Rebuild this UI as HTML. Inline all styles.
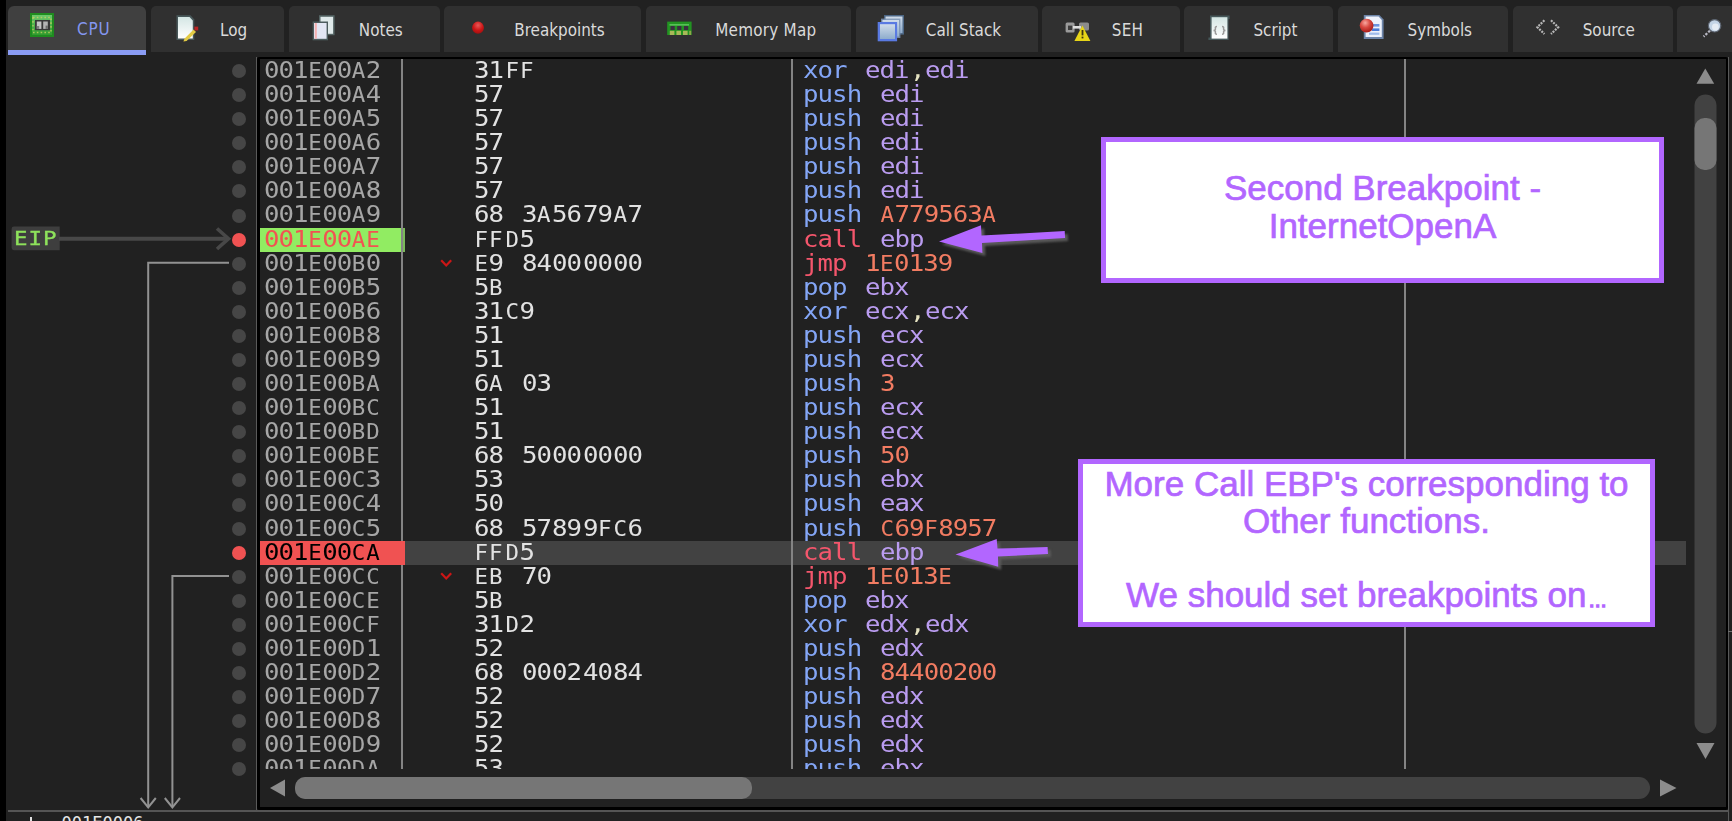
<!DOCTYPE html>
<html><head><meta charset="utf-8"><title>x32dbg - CPU</title>
<style>
html,body{margin:0;padding:0}
body{width:1732px;height:821px;background:#212121;overflow:hidden;position:relative;font-family:"Liberation Sans",sans-serif}
.a{position:absolute}
.tab{position:absolute;top:6px;height:46px;background:#303030;border-radius:5px 5px 0 0;color:#dadada;font-family:"DejaVu Sans Condensed","Liberation Sans",sans-serif;font-size:16.9px;line-height:46px;white-space:nowrap}
.tab span{position:absolute;top:0.5px}
.tab.sel{background:#404040;color:#8497f0;height:44px;border-bottom:5px solid #8a9cf4;border-radius:6px 6px 0 0}
.tab.sel span{top:-0.5px}
.mono{font-family:"DejaVu Sans Mono","Liberation Mono",monospace;font-size:23.6px;letter-spacing:0.34px;line-height:24px;white-space:pre}
.row{position:absolute;left:0;width:1732px;height:24px}
.row span{position:absolute;top:-1.2px;height:24px;transform:scaleX(1.09);transform-origin:0 0;letter-spacing:-0.86px}
.row i{display:inline-block;width:13.349px;text-align:center;font-style:normal;font-size:20.6px;letter-spacing:0;line-height:0}
.ad{color:#a6a6a6}
.by{color:#e2e2e2}
.m{color:#84a6f6}
.r{color:#ba9cf0}
.c{color:#f27c62}
.j{color:#f4566c}
.k{color:#e6e3c2}
.box{position:absolute;background:#fff;border:5px solid #b266ff;color:#b266ff;text-align:center;box-sizing:border-box;font-family:"Liberation Sans",sans-serif;white-space:nowrap;-webkit-text-stroke:0.7px #b266ff}
</style></head><body>

<div class="a" style="left:0;top:0;width:6.3px;height:821px;background:#000"></div>
<div class="tab sel" style="left:8px;width:138px"><span style="left:69px;letter-spacing:0.9px">CPU</span></div>
<div class="tab" style="left:150.5px;width:133.5px"><span style="left:69.5px">Log</span></div>
<div class="tab" style="left:288.5px;width:151.0px"><span style="left:70.3px">Notes</span></div>
<div class="tab" style="left:444px;width:196.5px"><span style="left:70.3px">Breakpoints</span></div>
<div class="tab" style="left:645.5px;width:205.5px"><span style="left:69.7px;letter-spacing:0.25px">Memory Map</span></div>
<div class="tab" style="left:856px;width:181.5px"><span style="left:69.8px">Call Stack</span></div>
<div class="tab" style="left:1042px;width:137.5px"><span style="left:69.8px;letter-spacing:0.25px">SEH</span></div>
<div class="tab" style="left:1184px;width:149px"><span style="left:69.4px">Script</span></div>
<div class="tab" style="left:1338px;width:170px"><span style="left:69.5px">Symbols</span></div>
<div class="tab" style="left:1513px;width:159.5px"><span style="left:69.7px">Source</span></div>
<div class="tab" style="left:1677px;width:63px"><span style="left:-1678px"></span></div>
<svg class="a" style="left:0;top:0" width="1732" height="56" viewBox="0 0 1732 56">
<defs>
<linearGradient id="gcpu" x1="0" y1="0" x2="0" y2="1"><stop offset="0" stop-color="#6cc86c"/><stop offset="1" stop-color="#2f9a2f"/></linearGradient>
<linearGradient id="gpg" x1="0" y1="0" x2="0" y2="1"><stop offset="0" stop-color="#d4e6e4"/><stop offset="1" stop-color="#ffffff"/></linearGradient>
<linearGradient id="gblue" x1="0" y1="0" x2="0" y2="1"><stop offset="0" stop-color="#d0dcea"/><stop offset="1" stop-color="#8eaccc"/></linearGradient>
<radialGradient id="gred" cx="0.4" cy="0.3" r="0.7"><stop offset="0" stop-color="#f8a8a0"/><stop offset="0.5" stop-color="#d84840"/><stop offset="1" stop-color="#a81c18"/></radialGradient>
<radialGradient id="gbp" cx="0.5" cy="0.3" r="0.7"><stop offset="0" stop-color="#e85858"/><stop offset="0.6" stop-color="#cc1616"/><stop offset="1" stop-color="#a01010"/></radialGradient>
</defs>
<!-- CPU -->
<rect x="30" y="13" width="24" height="24" fill="#1f8c1f"/>
<rect x="32" y="15" width="20" height="20" fill="url(#gcpu)"/>
<rect x="33" y="17.5" width="18" height="15" fill="none" stroke="#c8d060" stroke-width="1.4" stroke-dasharray="1.6 2.2" opacity="0.8"/>
<rect x="35" y="20" width="15" height="10.2" fill="#383838"/>
<rect x="36.8" y="21.5" width="4.6" height="7.4" fill="#c4c4c4"/><rect x="43.2" y="21.5" width="4.6" height="7.4" fill="#b4b4b4"/>
<rect x="36.8" y="26" width="2.4" height="2.9" fill="#7c7c7c"/><rect x="45.6" y="25.6" width="2.2" height="3.3" fill="#6c6c6c"/>
<!-- Log -->
<path d="M176.5 15.3 H190.5 L194.3 19.5 V40 H176.5 Z" fill="#48585a"/>
<path d="M178 17 H189.5 L192.8 20.6 V38.6 H178 Z" fill="url(#gpg)"/>
<path d="M193.6 29.4 L184.6 38.6 L183.4 41.4 L186.6 41 L196 32 Z" fill="#e2ca44"/>
<rect x="194.4" y="26.6" width="3.8" height="3.8" fill="#b82424"/>
<!-- Notes -->
<rect x="319" y="15.2" width="15.6" height="20" fill="#546464"/>
<rect x="320.5" y="16.8" width="12.6" height="17" fill="#dfe9ea"/>
<rect x="312.6" y="21.5" width="15.4" height="18.8" fill="#4c5c5e"/>
<rect x="314" y="23" width="12.6" height="15.8" fill="#e2e6f4"/>
<rect x="314.8" y="23" width="2" height="15.8" fill="#f4b0b0"/>
<!-- Breakpoints -->
<ellipse cx="478" cy="27.7" rx="5.9" ry="6.1" fill="url(#gbp)"/>
<!-- Memory map -->
<rect x="667.2" y="21.6" width="24.4" height="13.4" fill="#229422"/>
<rect x="669.5" y="24" width="19.5" height="1.6" fill="#58c058"/>
<rect x="670.5" y="26" width="4.2" height="4" fill="#3a3040"/><rect x="677.2" y="26" width="4.2" height="4" fill="#3a3040"/><rect x="684" y="26" width="4.2" height="4" fill="#3a3040"/>
<rect x="669.8" y="30.8" width="4.6" height="4.2" fill="#a8b858"/><rect x="676.4" y="30.8" width="4.6" height="4.2" fill="#a8b858"/><rect x="683" y="30.8" width="4.6" height="4.2" fill="#a8b858"/><rect x="689.2" y="30.8" width="2" height="4.2" fill="#8ca848"/>
<!-- Call stack -->
<rect x="884" y="15" width="20" height="19.6" fill="#4c6684"/>
<rect x="885.5" y="16.5" width="17" height="16.6" fill="url(#gblue)"/>
<rect x="881" y="18.6" width="19.4" height="19.4" fill="#7c94b4" opacity="0.85"/>
<rect x="882.4" y="20" width="16.6" height="16.6" fill="url(#gblue)"/>
<rect x="877.7" y="22" width="19.4" height="19.3" fill="#5a7ae2"/>
<rect x="880" y="24.2" width="15" height="14.8" fill="url(#gblue)"/>
<!-- SEH -->
<rect x="1065.6" y="22.6" width="9" height="9.8" rx="1.5" fill="#9a9a9a"/><rect x="1068" y="25.6" width="4.2" height="4.4" fill="#3c3c3c"/>
<rect x="1079" y="22.6" width="10" height="8" rx="1.5" fill="#8c8c8c"/>
<rect x="1073" y="26" width="8" height="2.6" fill="#e0e0e0"/>
<path d="M1082.4 25.6 L1090.4 41 H1074.4 Z" fill="#e6d418"/>
<rect x="1081.6" y="30" width="1.8" height="5.4" fill="#3a3410"/><rect x="1081.6" y="36.6" width="1.8" height="1.8" fill="#3a3410"/>
<!-- Script -->
<path d="M1210 15.4 H1229.6 V19 H1228.6 V40 H1208.4 V37.4 H1210 Z" fill="#46585a"/>
<rect x="1211.6" y="17.2" width="15.8" height="21.4" fill="url(#gpg)"/>
<path d="M1217 26.6 Q1215 26.6 1215.4 28.4 Q1215.8 30.2 1213.6 30.4 Q1215.8 30.6 1215.4 32.4 Q1215 34.2 1217 34.2 M1222 26.6 Q1224 26.6 1223.6 28.4 Q1223.2 30.2 1225.4 30.4 Q1223.2 30.6 1223.6 32.4 Q1224 34.2 1222 34.2" fill="none" stroke="#9a9a9a" stroke-width="1.5"/>
<!-- Symbols -->
<path d="M1363.8 15 H1379.4 L1383.6 19.4 V39 H1363.8 Z" fill="#6c84a8"/>
<path d="M1365.6 16.6 H1378.6 L1381.8 20 V37 H1365.6 Z" fill="#eef2fc"/>
<rect x="1372" y="24" width="7.4" height="2.6" fill="#6c94e0"/><rect x="1372" y="28.4" width="7.4" height="2.6" fill="#4c7cd8"/><rect x="1369" y="32.6" width="10.4" height="2.2" fill="#a0bcec"/>
<circle cx="1366.6" cy="25.6" r="6.9" fill="url(#gred)"/>
<!-- Source -->
<path d="M1544.4 20.3 L1537.4 27.2 L1544.4 34 M1551 20.3 L1558.2 27.2 L1551 34" fill="none" stroke="#b8b8b8" stroke-width="2.2" stroke-dasharray="2 1.1"/>
<!-- Search -->
<path d="M1710 30.6 L1703.6 36.6" stroke="#b8b8c4" stroke-width="2.2" stroke-dasharray="2.4 1.4"/>
<circle cx="1714.6" cy="25.8" r="6.2" fill="#c4d4e6" stroke="#5c6470" stroke-width="1.2"/>
<circle cx="1715.4" cy="27" r="3.4" fill="#e6ecf4"/>
</svg>

<div class="a" style="left:256px;top:57px;width:1px;height:754px;background:#5a5a5a"></div>
<div class="a" style="left:257.2px;top:56.7px;width:1470.5px;height:753.8px;background:#000;border-radius:2px"></div>
<div class="a" style="left:259.6px;top:58.7px;width:1466px;height:748.6px;background:#212121"></div>
<div class="a" style="left:1728px;top:57px;width:1px;height:764px;background:#5a5a5a"></div>
<div class="a" style="left:1728px;top:631px;width:4px;height:1.2px;background:#707070"></div>
<div class="a" style="left:8.3px;top:810.3px;width:1721px;height:2px;background:#555"></div>
<div class="a" style="left:404px;top:540.8px;width:1282px;height:24.1px;background:#424242"></div>
<div class="a" style="left:260px;top:227.69px;width:143px;height:24.1px;background:#91ec62"></div>
<div class="a" style="left:403px;top:227.69px;width:2.2px;height:24.1px;background:#7aba5a"></div>
<div class="a" style="left:401.2px;top:59px;width:2.2px;height:709.5px;background:#848484"></div>
<div class="a" style="left:791px;top:59px;width:2.2px;height:709.5px;background:#848484"></div>
<div class="a" style="left:1404px;top:59px;width:2.2px;height:709.5px;background:#848484"></div>
<div class="a" style="left:260px;top:540.8px;width:144.6px;height:24.1px;background:#f05252"></div>
<div class="a mono" style="left:0;top:59px;width:1732px;height:709.5px;overflow:hidden">
<div class="row" style="top:0.1px">
<span class="ad" style="left:264.2px">001<i>E</i>00<i>A</i>2</span>
<span class="by" style="left:474.2px">31</span>
<span class="by" style="left:504.6px"><i>F</i><i>F</i></span>
<span class="m" style="left:803.2px">xor </span>
<span class="r" style="left:865.0px">edi</span>
<span class="k" style="left:910.45px">,</span>
<span class="r" style="left:925.3px">edi</span>
</div>
<div class="row" style="top:24.19px">
<span class="ad" style="left:264.2px">001<i>E</i>00<i>A</i>4</span>
<span class="by" style="left:474.2px">57</span>
<span class="m" style="left:803.2px">push </span>
<span class="r" style="left:879.55px">edi</span>
</div>
<div class="row" style="top:48.27px">
<span class="ad" style="left:264.2px">001<i>E</i>00<i>A</i>5</span>
<span class="by" style="left:474.2px">57</span>
<span class="m" style="left:803.2px">push </span>
<span class="r" style="left:879.55px">edi</span>
</div>
<div class="row" style="top:72.35px">
<span class="ad" style="left:264.2px">001<i>E</i>00<i>A</i>6</span>
<span class="by" style="left:474.2px">57</span>
<span class="m" style="left:803.2px">push </span>
<span class="r" style="left:879.55px">edi</span>
</div>
<div class="row" style="top:96.44px">
<span class="ad" style="left:264.2px">001<i>E</i>00<i>A</i>7</span>
<span class="by" style="left:474.2px">57</span>
<span class="m" style="left:803.2px">push </span>
<span class="r" style="left:879.55px">edi</span>
</div>
<div class="row" style="top:120.53px">
<span class="ad" style="left:264.2px">001<i>E</i>00<i>A</i>8</span>
<span class="by" style="left:474.2px">57</span>
<span class="m" style="left:803.2px">push </span>
<span class="r" style="left:879.55px">edi</span>
</div>
<div class="row" style="top:144.61px">
<span class="ad" style="left:264.2px">001<i>E</i>00<i>A</i>9</span>
<span class="by" style="left:474.2px">68 </span>
<span class="by" style="left:522.05px">3<i>A</i></span>
<span class="by" style="left:552.45px">56</span>
<span class="by" style="left:582.85px">79</span>
<span class="by" style="left:613.25px"><i>A</i>7</span>
<span class="m" style="left:803.2px">push </span>
<span class="c" style="left:879.55px"><i>A</i>779563<i>A</i></span>
</div>
<div class="row" style="top:168.69px">
<span class="ad" style="left:264.2px;color:#f25252">001<i>E</i>00<i>A</i><i>E</i></span>
<span class="by" style="left:474.2px"><i>F</i><i>F</i></span>
<span class="by" style="left:504.6px"><i>D</i>5</span>
<span class="j" style="left:803.2px">call </span>
<span class="r" style="left:879.55px">ebp</span>
</div>
<div class="row" style="top:192.78px">
<span class="ad" style="left:264.2px">001<i>E</i>00<i>B</i>0</span>
<span class="by" style="left:474.2px"><i>E</i>9 </span>
<span class="by" style="left:522.05px">84</span>
<span class="by" style="left:552.45px">00</span>
<span class="by" style="left:582.85px">00</span>
<span class="by" style="left:613.25px">00</span>
<span class="j" style="left:803.2px">jmp </span>
<span class="c" style="left:865.0px">1<i>E</i>0139</span>
</div>
<div class="row" style="top:216.87px">
<span class="ad" style="left:264.2px">001<i>E</i>00<i>B</i>5</span>
<span class="by" style="left:474.2px">5<i>B</i></span>
<span class="m" style="left:803.2px">pop </span>
<span class="r" style="left:865.0px">ebx</span>
</div>
<div class="row" style="top:240.95px">
<span class="ad" style="left:264.2px">001<i>E</i>00<i>B</i>6</span>
<span class="by" style="left:474.2px">31</span>
<span class="by" style="left:504.6px"><i>C</i>9</span>
<span class="m" style="left:803.2px">xor </span>
<span class="r" style="left:865.0px">ecx</span>
<span class="k" style="left:910.45px">,</span>
<span class="r" style="left:925.3px">ecx</span>
</div>
<div class="row" style="top:265.04px">
<span class="ad" style="left:264.2px">001<i>E</i>00<i>B</i>8</span>
<span class="by" style="left:474.2px">51</span>
<span class="m" style="left:803.2px">push </span>
<span class="r" style="left:879.55px">ecx</span>
</div>
<div class="row" style="top:289.12px">
<span class="ad" style="left:264.2px">001<i>E</i>00<i>B</i>9</span>
<span class="by" style="left:474.2px">51</span>
<span class="m" style="left:803.2px">push </span>
<span class="r" style="left:879.55px">ecx</span>
</div>
<div class="row" style="top:313.21px">
<span class="ad" style="left:264.2px">001<i>E</i>00<i>B</i><i>A</i></span>
<span class="by" style="left:474.2px">6<i>A</i> </span>
<span class="by" style="left:522.05px">03</span>
<span class="m" style="left:803.2px">push </span>
<span class="c" style="left:879.55px">3</span>
</div>
<div class="row" style="top:337.29px">
<span class="ad" style="left:264.2px">001<i>E</i>00<i>B</i><i>C</i></span>
<span class="by" style="left:474.2px">51</span>
<span class="m" style="left:803.2px">push </span>
<span class="r" style="left:879.55px">ecx</span>
</div>
<div class="row" style="top:361.38px">
<span class="ad" style="left:264.2px">001<i>E</i>00<i>B</i><i>D</i></span>
<span class="by" style="left:474.2px">51</span>
<span class="m" style="left:803.2px">push </span>
<span class="r" style="left:879.55px">ecx</span>
</div>
<div class="row" style="top:385.46px">
<span class="ad" style="left:264.2px">001<i>E</i>00<i>B</i><i>E</i></span>
<span class="by" style="left:474.2px">68 </span>
<span class="by" style="left:522.05px">50</span>
<span class="by" style="left:552.45px">00</span>
<span class="by" style="left:582.85px">00</span>
<span class="by" style="left:613.25px">00</span>
<span class="m" style="left:803.2px">push </span>
<span class="c" style="left:879.55px">50</span>
</div>
<div class="row" style="top:409.55px">
<span class="ad" style="left:264.2px">001<i>E</i>00<i>C</i>3</span>
<span class="by" style="left:474.2px">53</span>
<span class="m" style="left:803.2px">push </span>
<span class="r" style="left:879.55px">ebx</span>
</div>
<div class="row" style="top:433.63px">
<span class="ad" style="left:264.2px">001<i>E</i>00<i>C</i>4</span>
<span class="by" style="left:474.2px">50</span>
<span class="m" style="left:803.2px">push </span>
<span class="r" style="left:879.55px">eax</span>
</div>
<div class="row" style="top:457.72px">
<span class="ad" style="left:264.2px">001<i>E</i>00<i>C</i>5</span>
<span class="by" style="left:474.2px">68 </span>
<span class="by" style="left:522.05px">57</span>
<span class="by" style="left:552.45px">89</span>
<span class="by" style="left:582.85px">9<i>F</i></span>
<span class="by" style="left:613.25px"><i>C</i>6</span>
<span class="m" style="left:803.2px">push </span>
<span class="c" style="left:879.55px"><i>C</i>69<i>F</i>8957</span>
</div>
<div class="row" style="top:481.8px">
<span class="ad" style="left:264.2px;color:#000">001<i>E</i>00<i>C</i><i>A</i></span>
<span class="by" style="left:474.2px"><i>F</i><i>F</i></span>
<span class="by" style="left:504.6px"><i>D</i>5</span>
<span class="j" style="left:803.2px">call </span>
<span class="r" style="left:879.55px">ebp</span>
</div>
<div class="row" style="top:505.88px">
<span class="ad" style="left:264.2px">001<i>E</i>00<i>C</i><i>C</i></span>
<span class="by" style="left:474.2px"><i>E</i><i>B</i> </span>
<span class="by" style="left:522.05px">70</span>
<span class="j" style="left:803.2px">jmp </span>
<span class="c" style="left:865.0px">1<i>E</i>013<i>E</i></span>
</div>
<div class="row" style="top:529.97px">
<span class="ad" style="left:264.2px">001<i>E</i>00<i>C</i><i>E</i></span>
<span class="by" style="left:474.2px">5<i>B</i></span>
<span class="m" style="left:803.2px">pop </span>
<span class="r" style="left:865.0px">ebx</span>
</div>
<div class="row" style="top:554.06px">
<span class="ad" style="left:264.2px">001<i>E</i>00<i>C</i><i>F</i></span>
<span class="by" style="left:474.2px">31</span>
<span class="by" style="left:504.6px"><i>D</i>2</span>
<span class="m" style="left:803.2px">xor </span>
<span class="r" style="left:865.0px">edx</span>
<span class="k" style="left:910.45px">,</span>
<span class="r" style="left:925.3px">edx</span>
</div>
<div class="row" style="top:578.14px">
<span class="ad" style="left:264.2px">001<i>E</i>00<i>D</i>1</span>
<span class="by" style="left:474.2px">52</span>
<span class="m" style="left:803.2px">push </span>
<span class="r" style="left:879.55px">edx</span>
</div>
<div class="row" style="top:602.23px">
<span class="ad" style="left:264.2px">001<i>E</i>00<i>D</i>2</span>
<span class="by" style="left:474.2px">68 </span>
<span class="by" style="left:522.05px">00</span>
<span class="by" style="left:552.45px">02</span>
<span class="by" style="left:582.85px">40</span>
<span class="by" style="left:613.25px">84</span>
<span class="m" style="left:803.2px">push </span>
<span class="c" style="left:879.55px">84400200</span>
</div>
<div class="row" style="top:626.31px">
<span class="ad" style="left:264.2px">001<i>E</i>00<i>D</i>7</span>
<span class="by" style="left:474.2px">52</span>
<span class="m" style="left:803.2px">push </span>
<span class="r" style="left:879.55px">edx</span>
</div>
<div class="row" style="top:650.4px">
<span class="ad" style="left:264.2px">001<i>E</i>00<i>D</i>8</span>
<span class="by" style="left:474.2px">52</span>
<span class="m" style="left:803.2px">push </span>
<span class="r" style="left:879.55px">edx</span>
</div>
<div class="row" style="top:674.48px">
<span class="ad" style="left:264.2px">001<i>E</i>00<i>D</i>9</span>
<span class="by" style="left:474.2px">52</span>
<span class="m" style="left:803.2px">push </span>
<span class="r" style="left:879.55px">edx</span>
</div>
<div class="row" style="top:698.57px">
<span class="ad" style="left:264.2px">001<i>E</i>00<i>D</i><i>A</i></span>
<span class="by" style="left:474.2px">53</span>
<span class="m" style="left:803.2px">push </span>
<span class="r" style="left:879.55px">ebx</span>
</div>
</div>
<div class="a" style="left:232px;top:64.0px;width:14px;height:14px;border-radius:50%;background:#464646"></div>
<div class="a" style="left:232px;top:88.09px;width:14px;height:14px;border-radius:50%;background:#464646"></div>
<div class="a" style="left:232px;top:112.17px;width:14px;height:14px;border-radius:50%;background:#464646"></div>
<div class="a" style="left:232px;top:136.25px;width:14px;height:14px;border-radius:50%;background:#464646"></div>
<div class="a" style="left:232px;top:160.34px;width:14px;height:14px;border-radius:50%;background:#464646"></div>
<div class="a" style="left:232px;top:184.43px;width:14px;height:14px;border-radius:50%;background:#464646"></div>
<div class="a" style="left:232px;top:208.51px;width:14px;height:14px;border-radius:50%;background:#464646"></div>
<div class="a" style="left:232px;top:232.59px;width:14px;height:14px;border-radius:50%;background:#f05252"></div>
<div class="a" style="left:232px;top:256.68px;width:14px;height:14px;border-radius:50%;background:#464646"></div>
<div class="a" style="left:232px;top:280.76px;width:14px;height:14px;border-radius:50%;background:#464646"></div>
<div class="a" style="left:232px;top:304.85px;width:14px;height:14px;border-radius:50%;background:#464646"></div>
<div class="a" style="left:232px;top:328.94px;width:14px;height:14px;border-radius:50%;background:#464646"></div>
<div class="a" style="left:232px;top:353.02px;width:14px;height:14px;border-radius:50%;background:#464646"></div>
<div class="a" style="left:232px;top:377.11px;width:14px;height:14px;border-radius:50%;background:#464646"></div>
<div class="a" style="left:232px;top:401.19px;width:14px;height:14px;border-radius:50%;background:#464646"></div>
<div class="a" style="left:232px;top:425.28px;width:14px;height:14px;border-radius:50%;background:#464646"></div>
<div class="a" style="left:232px;top:449.36px;width:14px;height:14px;border-radius:50%;background:#464646"></div>
<div class="a" style="left:232px;top:473.44px;width:14px;height:14px;border-radius:50%;background:#464646"></div>
<div class="a" style="left:232px;top:497.53px;width:14px;height:14px;border-radius:50%;background:#464646"></div>
<div class="a" style="left:232px;top:521.62px;width:14px;height:14px;border-radius:50%;background:#464646"></div>
<div class="a" style="left:232px;top:545.7px;width:14px;height:14px;border-radius:50%;background:#f05252"></div>
<div class="a" style="left:232px;top:569.78px;width:14px;height:14px;border-radius:50%;background:#464646"></div>
<div class="a" style="left:232px;top:593.87px;width:14px;height:14px;border-radius:50%;background:#464646"></div>
<div class="a" style="left:232px;top:617.96px;width:14px;height:14px;border-radius:50%;background:#464646"></div>
<div class="a" style="left:232px;top:642.04px;width:14px;height:14px;border-radius:50%;background:#464646"></div>
<div class="a" style="left:232px;top:666.12px;width:14px;height:14px;border-radius:50%;background:#464646"></div>
<div class="a" style="left:232px;top:690.21px;width:14px;height:14px;border-radius:50%;background:#464646"></div>
<div class="a" style="left:232px;top:714.3px;width:14px;height:14px;border-radius:50%;background:#464646"></div>
<div class="a" style="left:232px;top:738.38px;width:14px;height:14px;border-radius:50%;background:#464646"></div>
<div class="a" style="left:232px;top:762.47px;width:14px;height:14px;border-radius:50%;background:#464646"></div>
<svg class="a" style="left:438px;top:257.78px" width="16" height="12" viewBox="0 0 16 12"><path d="M3.2 2.2 L8.2 7.4 L13.2 2.2" fill="none" stroke="#cc1616" stroke-width="2.2"/></svg>
<svg class="a" style="left:438px;top:570.88px" width="16" height="12" viewBox="0 0 16 12"><path d="M3.2 2.2 L8.2 7.4 L13.2 2.2" fill="none" stroke="#cc1616" stroke-width="2.2"/></svg>
<svg class="a" style="left:0;top:0" width="260" height="821" viewBox="0 0 260 821">
<path d="M14 226.6 H59.7 V250.2 H14 Q11.6 250.2 11.6 247.8 V229 Q11.6 226.6 14 226.6 Z" fill="#3e3e3e"/>
<path d="M59 238.7 H227" stroke="#484848" stroke-width="4" fill="none"/>
<path d="M217 228.5 L228.5 238.7 L217 249" stroke="#484848" stroke-width="3.6" fill="none"/>
<path d="M229 262.78 H148.2 V807" stroke="#929292" stroke-width="2" fill="none"/>
<path d="M229 575.88 H172.4 V807" stroke="#929292" stroke-width="2" fill="none"/>
<path d="M140.6 798 L148.2 807.4 L155.8 798" stroke="#929292" stroke-width="2" fill="none"/>
<path d="M164.8 798 L172.4 807.4 L180 798" stroke="#929292" stroke-width="2" fill="none"/>
</svg>
<div class="a mono" style="left:14.4px;top:226.3px;color:#8ee25c;font-size:20px;line-height:24px;letter-spacing:0.95px;transform:scaleX(1.12);transform-origin:0 0;-webkit-text-stroke:0.35px #8ee25c">EIP</div>
<svg class="a" style="left:260px;top:59px" width="1466" height="748" viewBox="260 59 1466 748">
<rect x="1694.5" y="94.5" width="22" height="639" rx="11" fill="#424242"/>
<rect x="1694.5" y="118" width="22" height="52" rx="10" fill="#767676"/>
<path d="M1696.5 83.8 L1705.3 68.4 L1714.2 83.8 Z" fill="#8c8c8c"/>
<path d="M1696.5 743 L1714.5 743 L1705.5 759 Z" fill="#8c8c8c"/>
<rect x="295" y="777" width="1355" height="22" rx="11" fill="#424242"/>
<rect x="295" y="777" width="457" height="22" rx="10" fill="#767676"/>
<path d="M285 779.5 L285 796.5 L270 788 Z" fill="#8c8c8c"/>
<path d="M1660 779.5 L1660 796.5 L1676.5 788 Z" fill="#8c8c8c"/>
</svg>
<svg class="a" style="left:900px;top:200px;filter:drop-shadow(3.5px 3.5px 1.2px rgba(92,92,92,0.95))" width="220" height="80" viewBox="900 200 220 80">
<path d="M939 241.4 L981 225.2 L981.5 235.6 L1064.7 231 L1065.1 238 L982 243 L982.4 253 Z" fill="#b266ff"/></svg>
<svg class="a" style="left:900px;top:520px;filter:drop-shadow(3.5px 3.5px 1.2px rgba(92,92,92,0.95))" width="220" height="80" viewBox="900 520 220 80">
<path d="M955.5 554.4 L996.7 539 L997.5 548.6 L1047.6 547.1 L1048 554 L998 556.6 L998.2 566.7 Z" fill="#b266ff"/></svg>
<div class="box" style="left:1101px;top:137px;width:563px;height:146px;font-size:35px;line-height:37.7px;padding-top:27.3px">Second Breakpoint -<br>InternetOpenA</div>
<div class="box" style="left:1078px;top:459px;width:577px;height:168px;font-size:35px;line-height:37.3px;padding-top:0.5px">More Call EBP's corresponding to<br>Other functions.<br><br>We should set breakpoints on<span style="font-size:18.8px;line-height:0;-webkit-text-stroke:1.5px #b266ff;margin-left:1.6px">…</span></div>
<div class="a mono" style="left:61.5px;top:813.1px;color:#e6e6e6;font-size:17px;letter-spacing:0;line-height:20px">001E0006</div>
<div class="a" style="left:30.2px;top:816.6px;width:2.2px;height:5px;background:#e0e0e0"></div>
</body></html>
